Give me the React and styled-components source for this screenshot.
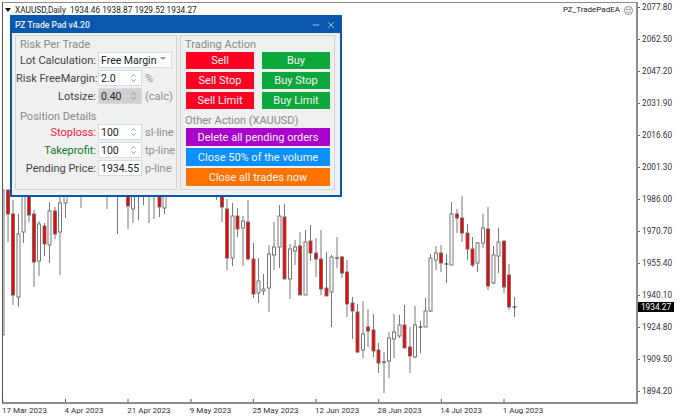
import React from 'react'
import styled, { createGlobalStyle } from 'styled-components'
import { Minus, X, ChevronUp, ChevronDown } from 'lucide-react'

const Global = createGlobalStyle`
  html, body { margin: 0; padding: 0; background: #fff; }
  body { font-family: Roboto, "Liberation Sans", sans-serif; }
`

const Page = styled.div`
  width: 680px;
  height: 418px;
  display: grid;
  grid-template-columns: 638px 42px;
  grid-template-rows: 404px 14px;
  overflow: hidden;
  background: #fff;
`

const Plot = styled.div`
  position: relative;
  margin: 2px 0 0 2px;
  border-top: 1px solid #8c8c8c;
  border-left: 1px solid #555;
  border-right: 2px solid #8c8c8c;
  border-bottom: 2px solid #8c8c8c;
  overflow: hidden;
  svg { display: block; }
`

const ChartText = styled.div`
  position: absolute;
  top: 1px;
  height: 12px;
  display: flex;
  align-items: center;
  gap: 4px;
  line-height: 12px;
  color: #222;
  white-space: pre;
  ${p => (p.$right ? 'right: 3px; font-size: 8px;' : 'left: 2px; font-size: 8.3px;')}
`

const Arrow = styled.span`
  width: 0;
  height: 0;
  border-left: 3px solid transparent;
  border-right: 3px solid transparent;
  border-top: 4px solid #111;
`

const PriceAxis = styled.div`
  position: relative;
  display: flex;
  flex-direction: column;
  padding-top: 1px;
`

const Price = styled.div`
  flex: none;
  height: 32px;
  display: flex;
  align-items: flex-start;
  font-size: 8.3px;
  line-height: 12px;
  color: #333;
  &::before {
    content: '';
    width: 2px;
    height: 1px;
    margin: 5.5px 2px 0 0;
    background: #666;
  }
`

const PriceTag = styled.div`
  position: absolute;
  top: 302px;
  left: 0;
  width: 36px;
  height: 10px;
  background: #000;
  color: #fff;
  font-size: 8.3px;
  line-height: 10px;
  text-align: center;
`

const TimeAxis = styled.div`
  grid-column: 1 / 3;
  display: flex;
  padding-left: 2px;
`

const TimeLabel = styled.div`
  width: 62.6px;
  flex: none;
  font-size: 8px;
  line-height: 13px;
  color: #333;
  white-space: nowrap;
`

const Panel = styled.section`
  position: absolute;
  left: 10px;
  top: 15px;
  width: 332px;
  height: 182px;
  box-sizing: border-box;
  border: 2px solid #0a58ad;
  background: #f0f0f0;
  display: flex;
  flex-direction: column;
`

const TitleBar = styled.header`
  height: 16px;
  flex: none;
  background: #0a58ad;
  color: #e6eef8;
  font-size: 8.6px;
  font-weight: 500;
  display: flex;
  align-items: center;
  justify-content: space-between;
  padding: 0 4px 0 3px;
`

const WindowButtons = styled.div`
  display: flex;
  gap: 5px;
  color: #b9cfe8;
`

const Body = styled.div`
  flex: 1;
  display: flex;
  gap: 3px;
  padding: 2px 5px 5px 3px;
  min-height: 0;
`

const Group = styled.div`
  box-sizing: border-box;
  width: ${p => p.$width}px;
  border: 1px solid #d4d4d4;
  padding: 0 4px;
  display: flex;
  flex-direction: column;
`

const GroupTitle = styled.div`
  height: 16px;
  margin-top: ${p => p.$top || 0}px;
  margin-bottom: ${p => p.$bottom || 0}px;
  font-size: 11px;
  line-height: 18px;
  color: #8a8a8a;
  white-space: nowrap;
`

const Rows = styled.div`
  display: flex;
  flex-direction: column;
  gap: 2px;
`

const Row = styled.div`
  display: grid;
  grid-template-columns: 80px auto auto;
  justify-content: start;
  align-items: center;
  gap: 2px;
  margin-left: -4px;
  height: 16px;
`

const Label = styled.label`
  font-size: 11px;
  text-align: right;
  white-space: nowrap;
  color: ${p => p.$color || '#444'};
`

const Field = styled.div`
  box-sizing: border-box;
  height: 16px;
  width: ${p => p.$width || 44}px;
  border: 1px solid #d3dde6;
  background: ${p => (p.$disabled ? '#cfcfcf' : '#fff')};
  color: #222;
  font-size: 10.5px;
  line-height: 15px;
  padding-left: 2px;
  display: flex;
  align-items: center;
  justify-content: space-between;
  white-space: nowrap;
`

const Spin = styled.span`
  display: flex;
  flex-direction: column;
  margin-right: 4px;
  color: #888;
  svg { display: block; margin: -1px 0; }
`

const Caret = styled.span`
  width: 0;
  height: 0;
  margin: 0 5px 3px 0;
  border-left: 3px solid transparent;
  border-right: 3px solid transparent;
  border-top: 3px solid #999;
`

const Unit = styled.span`
  font-size: 11px;
  color: #8f8f8f;
  white-space: nowrap;
  margin-left: 1px;
`

const TradeGrid = styled.div`
  display: grid;
  grid-template-columns: 68px 68px;
  grid-auto-rows: 17px;
  gap: 3px 8px;
  padding-left: 1px;
`

const Wide = styled.div`
  display: flex;
  flex-direction: column;
  gap: 2px;
  padding-left: 1px;
`

const ActionButton = styled.button`
  border: none;
  padding: 0;
  width: ${p => (p.$wide ? '144px' : 'auto')};
  height: ${p => (p.$wide ? '18px' : 'auto')};
  background: ${p => p.$bg};
  color: #f3f3f3;
  font-family: inherit;
  font-size: 11px;
  line-height: 1;
  white-space: nowrap;
`

const up = '#fff'
const dn = '#f00'

// [index, body top, body bottom, wick top, wick bottom, colour] in page pixels
const candles = [
  [0, 190, 335, 190, 340, up], [1, 190, 214, 190, 242, dn], [2, 214, 295, 200, 305, dn],
  [3, 234, 297, 214, 307, up], [4, 190, 232, 190, 243, up], [5, 190, 215, 190, 222, dn],
  [6, 214, 262, 210, 287, dn], [7, 224, 261, 221, 276, up], [8, 226, 244, 223, 256, dn],
  [9, 211, 245, 202, 263, up], [10, 211, 234, 207, 239, dn], [11, 203, 232, 197, 275, up],
  [12, 190, 203, 190, 218, up], [15, 180, 180, 180, 208, up], [20, 180, 180, 180, 209, up],
  [22, 180, 180, 180, 234, up], [24, 190, 206, 190, 229, dn], [25, 190, 209, 190, 223, up],
  [26, 180, 180, 180, 220, up], [27, 180, 180, 180, 205, up], [28, 180, 180, 180, 223, up],
  [29, 180, 180, 180, 219, up], [30, 190, 207, 190, 217, dn], [31, 190, 208, 190, 214, up],
  [41, 180, 180, 180, 200, up], [42, 190, 207, 190, 222, dn], [43, 209, 258, 199, 270, dn],
  [44, 216, 258, 203, 266, up], [45, 216, 229, 208, 237, dn], [46, 221, 228, 216, 266, up],
  [47, 222, 259, 200, 260, dn], [48, 259, 294, 243, 298, dn], [49, 281, 293, 258, 303, up],
  [50, 289, 291, 274, 295, up], [51, 254, 288, 245, 312, up], [52, 247, 255, 222, 270, up],
  [53, 216, 247, 205, 268, up], [54, 217, 279, 204, 279, dn], [55, 249, 279, 244, 299, up],
  [56, 247, 251, 240, 265, up], [57, 246, 295, 232, 295, dn], [58, 242, 295, 230, 295, up],
  [59, 241, 253, 225, 261, dn], [60, 253, 259, 238, 277, dn], [61, 259, 289, 230, 295, dn],
  [62, 288, 296, 252, 296, dn], [63, 257, 292, 255, 327, up], [64, 258, 258, 237, 268, up],
  [65, 257, 273, 256, 278, dn], [66, 272, 304, 260, 317, dn], [67, 303, 311, 297, 339, dn],
  [68, 312, 352, 304, 353, dn], [69, 334, 350, 301, 358, up], [70, 327, 331, 309, 347, dn],
  [71, 330, 351, 314, 357, dn], [72, 350, 363, 343, 373, dn], [73, 362, 362, 352, 393, up],
  [74, 338, 361, 332, 378, up], [75, 332, 339, 314, 358, up], [76, 325, 336, 315, 338, up],
  [77, 325, 348, 305, 348, dn], [78, 347, 356, 327, 373, dn], [79, 325, 357, 306, 358, up],
  [80, 327, 327, 321, 353, up], [81, 311, 327, 298, 327, up], [82, 258, 311, 254, 312, up],
  [83, 253, 260, 246, 270, up], [84, 253, 263, 245, 272, dn], [85, 264, 264, 254, 283, up],
  [86, 214, 265, 202, 265, up], [87, 214, 218, 209, 233, dn], [88, 218, 233, 196, 242, dn],
  [89, 233, 249, 224, 260, dn], [90, 249, 265, 237, 267, dn], [91, 243, 263, 242, 272, up],
  [92, 228, 243, 214, 248, up], [93, 229, 286, 207, 290, dn], [94, 255, 283, 246, 284, up],
  [95, 242, 256, 228, 273, up], [96, 241, 287, 241, 293, dn], [97, 275, 307, 264, 310, dn],
  [98, 307, 307, 297, 317, up]
]

const ticks = [2.7, 65.5, 128, 191, 253.3, 316, 378.7, 441.3, 504]

const Candles = () => (
  <svg width="640" height="404" viewBox="3 3 640 404">
    {ticks.map(x => (
      <line key={x} x1={x} x2={x} y1="399" y2="403" stroke="#555" />
    ))}
    {candles.map(([i, top, bottom, wickTop, wickBottom, color]) => {
      const x = Math.round((2.7 + 5.22 * i) * 2) / 2
      const flat = top === bottom
      return (
        <g key={i} stroke="#6a6a6a" strokeWidth="0.9">
          <line x1={x} x2={x} y1={wickTop} y2={wickBottom} />
          {flat ? (
            top > 190 && <line x1={x - 2} x2={x + 2} y1={top} y2={top} stroke="#222" />
          ) : (
            <rect x={x - 1.5} y={top} width="3" height={bottom - top} fill={color} />
          )}
        </g>
      )
    })}
  </svg>
)

const Smiley = () => (
  <svg width="9" height="9" viewBox="0 0 18 18" fill="none" stroke="#666" strokeWidth="1.5">
    <circle cx="9" cy="9" r="8" />
    <circle cx="6" cy="7" r="1" fill="#666" />
    <circle cx="12" cy="7" r="1" fill="#666" />
    <path d="M5 11c1 2.5 7 2.5 8 0" />
  </svg>
)

const Spinner = () => (
  <Spin>
    <ChevronUp size={7} strokeWidth={3} />
    <ChevronDown size={7} strokeWidth={3} />
  </Spin>
)

const prices = ['2077.80', '2062.50', '2047.20', '2031.90', '2016.60', '2001.30', '1986.00',
  '1970.70', '1955.40', '1940.10', '1924.80', '1909.50', '1894.20']

const dates = ['17 Mar 2023', '4 Apr 2023', '21 Apr 2023', '9 May 2023', '25 May 2023',
  '12 Jun 2023', '28 Jun 2023', '14 Jul 2023', '1 Aug 2023']

const TradePad = () => (
  <Panel>
    <TitleBar>
      <span>PZ Trade Pad v4.20</span>
      <WindowButtons>
        <Minus size={10} strokeWidth={2} />
        <X size={10} strokeWidth={2} />
      </WindowButtons>
    </TitleBar>
    <Body>
      <Group $width={162}>
        <GroupTitle>Risk Per Trade</GroupTitle>
        <Rows>
          <Row>
            <Label>Lot Calculation:</Label>
            <Field $width={74}>Free Margin<Caret /></Field>
          </Row>
          <Row>
            <Label>Risk FreeMargin:</Label>
            <Field>2.0<Spinner /></Field>
            <Unit>%</Unit>
          </Row>
          <Row>
            <Label>Lotsize:</Label>
            <Field $disabled>0.40<Spinner /></Field>
            <Unit>(calc)</Unit>
          </Row>
        </Rows>
        <GroupTitle $top={4}>Position Details</GroupTitle>
        <Rows>
          <Row>
            <Label $color="#f0213c">Stoploss:</Label>
            <Field>100<Spinner /></Field>
            <Unit>sl-line</Unit>
          </Row>
          <Row>
            <Label $color="#0c7a22">Takeprofit:</Label>
            <Field>100<Spinner /></Field>
            <Unit>tp-line</Unit>
          </Row>
          <Row>
            <Label>Pending Price:</Label>
            <Field>1934.55</Field>
            <Unit>p-line</Unit>
          </Row>
        </Rows>
      </Group>
      <Group $width={155}>
        <GroupTitle>Trading Action</GroupTitle>
        <TradeGrid>
          <ActionButton $bg="#ff0022">Sell</ActionButton>
          <ActionButton $bg="#0ca83c">Buy</ActionButton>
          <ActionButton $bg="#ff0022">Sell Stop</ActionButton>
          <ActionButton $bg="#0ca83c">Buy Stop</ActionButton>
          <ActionButton $bg="#ff0022">Sell Limit</ActionButton>
          <ActionButton $bg="#0ca83c">Buy Limit</ActionButton>
        </TradeGrid>
        <GroupTitle $top={3}>Other Action (XAUUSD)</GroupTitle>
        <Wide>
          <ActionButton $wide $bg="#aa00cc">Delete all pending orders</ActionButton>
          <ActionButton $wide $bg="#0a90ff">Close 50% of the volume</ActionButton>
          <ActionButton $wide $bg="#ff7300">Close all trades now</ActionButton>
        </Wide>
      </Group>
    </Body>
  </Panel>
)

export default function App() {
  return (
    <>
      <Global />
      <Page>
        <Plot>
          <Candles />
          <ChartText>
            <Arrow />
            {'XAUUSD,Daily  1934.46 1938.87 1929.52 1934.27'}
          </ChartText>
          <ChartText $right>
            PZ_TradePadEA
            <Smiley />
          </ChartText>
        </Plot>
        <PriceAxis>
          {prices.map(p => <Price key={p}>{p}</Price>)}
          <PriceTag>1934.27</PriceTag>
        </PriceAxis>
        <TimeAxis>
          {dates.map(d => <TimeLabel key={d}>{d}</TimeLabel>)}
        </TimeAxis>
        <TradePad />
      </Page>
    </>
  )
}
